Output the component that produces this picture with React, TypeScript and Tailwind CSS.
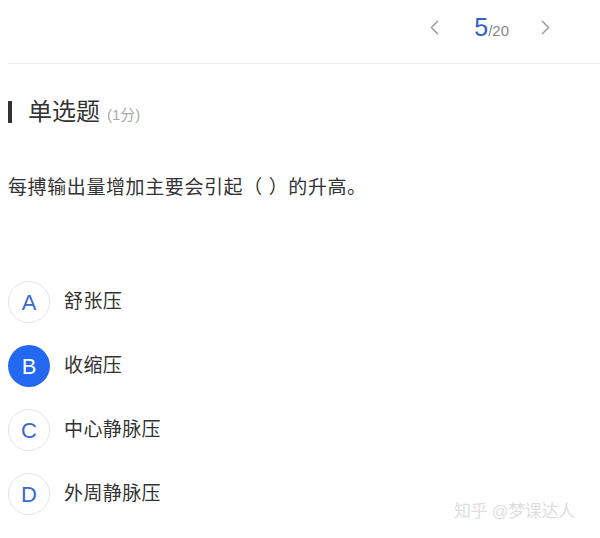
import { ChevronLeft, ChevronRight } from 'lucide-react'

const options = [
  { key: 'A', text: '舒张压', selected: false },
  { key: 'B', text: '收缩压', selected: true },
  { key: 'C', text: '中心静脉压', selected: false },
  { key: 'D', text: '外周静脉压', selected: false },
]

export default function App() {
  return (
    <div
      className="relative w-[600px] h-[538px] bg-white overflow-hidden text-[#333]"
      style={{ fontFamily: '"Liberation Sans", "Noto Sans CJK SC", sans-serif' }}
    >
      {/* pager */}
      <div className="ml-2 h-[64px] border-b border-[#ececec] flex items-center justify-end pr-[42px] pb-[9px]">
        <ChevronLeft size={25} strokeWidth={1.3} className="text-[#999]" />
        <div className="ml-[27px] mr-[24px] flex items-baseline">
          <span className="text-[25px] leading-none text-[#2f5fd0]">5</span>
          <span className="text-[15px] leading-none text-[#888]">/20</span>
        </div>
        <ChevronRight size={25} strokeWidth={1.3} className="text-[#999]" />
      </div>

      {/* title */}
      <div className="mt-[36px] ml-2 flex items-center h-[24px]">
        <div className="w-[4px] h-[22px] bg-[#333]" />
        <span className="ml-4 text-[24px] leading-none text-[#333]">单选题</span>
        <span className="ml-[7px] mt-[4px] text-[15px] leading-none text-[#aaa]">(1分)</span>
      </div>

      {/* question */}
      <p className="mt-[52px] ml-2 text-[19px] tracking-[0.6px] leading-[24px] text-[#333]">
        每搏输出量增加主要会引起（ ）的升高。
      </p>

      {/* options */}
      <div className="mt-[82px] ml-2 flex flex-col gap-[24px]">
        {options.map((o) => (
          <div key={o.key} className="flex items-center h-[40px]">
            <div
              className={
                o.selected
                  ? 'w-[42px] h-[42px] rounded-full bg-[#2468f2] text-white flex items-center justify-center text-[22px]'
                  : 'w-[42px] h-[42px] rounded-full border border-[#dfe4ee] text-[#3a68d0] flex items-center justify-center text-[22px]'
              }
            >
              {o.key}
            </div>
            <span className="ml-[14px] text-[19px] tracking-[0.4px] text-[#333]">{o.text}</span>
          </div>
        ))}
      </div>

      {/* watermark */}
      <div className="absolute left-[454px] top-[499px] text-[17px] text-[#dedede] tracking-tight">
        知乎 @梦课达人
      </div>
    </div>
  )
}
